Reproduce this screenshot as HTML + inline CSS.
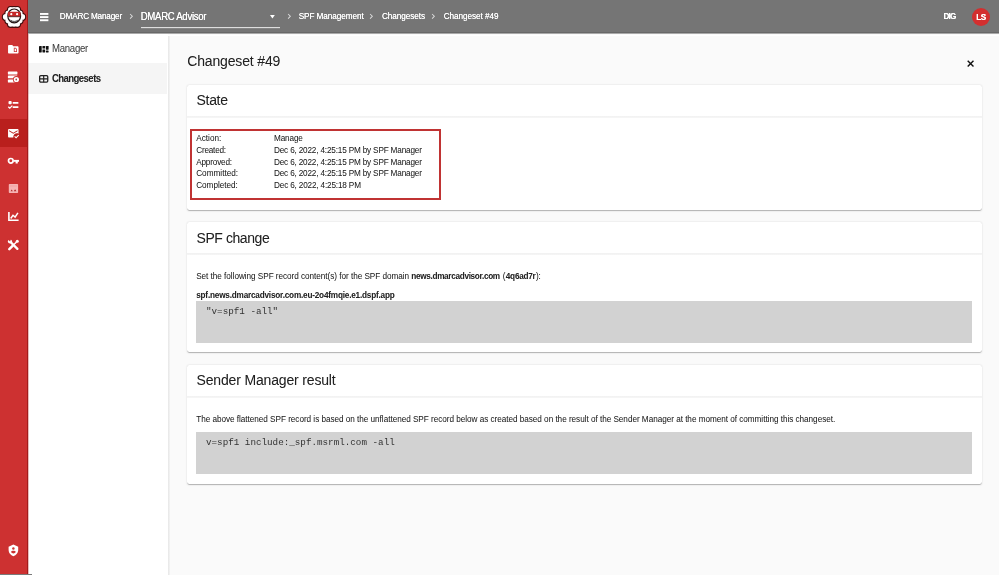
<!DOCTYPE html>
<html><head><meta charset="utf-8">
<style>
*{box-sizing:border-box;margin:0;padding:0}
html,body{width:999px;height:575px;overflow:hidden;background:#fafafa;font-family:"Liberation Sans",sans-serif;color:#212121}
#rail{position:absolute;left:0;top:0;width:28px;height:575px;background:#cd3131;border-right:1px solid #a31b1b}
#re{position:absolute;left:28px;top:34px;width:1px;height:541px;background:rgba(190,70,70,.35)}
#rail .act{position:absolute;left:0;top:119px;width:27px;height:28px;background:#b91f1d}
#rail svg{position:absolute;fill:#fff}
#gs{position:absolute;left:0;top:574px;width:32px;height:1px;background:#7a7a7a}
#hdr{position:absolute;left:28px;top:0;width:971px;height:34px;background:#757575;box-shadow:inset 0 -1px 0 #686868;border-bottom:1px solid #a9a9a9}
#hdr svg{position:absolute;fill:#fff}
#ul{position:absolute;left:140.7px;top:27px;width:139.3px;height:1px;background:#dedede;box-shadow:0 1px 0 rgba(255,255,255,.12)}
#av{position:absolute;left:972px;top:7.7px;width:18.4px;height:18.4px;border-radius:50%;background:#d32f2f}
#nav{position:absolute;left:28px;top:34px;width:140px;height:541px;background:#fff}
#nb{position:absolute;left:168px;top:36px;width:2px;height:539px;background:linear-gradient(90deg,#e6e6e6,#f4f4f4)}
#wl{position:absolute;left:168px;top:35px;width:831px;height:1px;background:#fff}
#nav .sel{position:absolute;left:0;top:29px;width:139px;height:31px;background:#f5f5f5}
.card{position:absolute;left:186.8px;width:795.4px;background:#fff;box-shadow:0 1.2px .6px -.6px rgba(0,0,0,.2),0 .6px .6px 0 rgba(0,0,0,.14),0 .6px 1.8px 0 rgba(0,0,0,.17);border-radius:2.3px}
.card .hr{position:absolute;left:0;right:0;top:31.5px;height:2px;background:linear-gradient(#f1f1f1,#f6f6f6)}
.t{position:absolute;white-space:pre;text-shadow:0 0 .4px rgba(33,33,33,.15)}
.w{text-shadow:0 0 .6px #fff}
.code{position:absolute;left:196px;width:776px;background:#d2d2d2}
#rb{position:absolute;left:189.8px;top:128.7px;width:251.6px;height:71.3px;border:2px solid #c03333}
svg{overflow:visible}
#root{position:absolute;left:0;top:0;width:999px;height:575px;will-change:transform}
</style></head><body>
<div id="root">
<div id="rail"><div class="act"></div>
<!-- logo -->
<svg style="left:0;top:0" width="28" height="34" viewBox="0 0 28 34">
<g fill="#3d0c0c"><circle cx="10.80" cy="9.90" r="3.9"/><circle cx="14.00" cy="9.90" r="3.9"/><circle cx="17.20" cy="9.90" r="3.9"/><circle cx="19.75" cy="13.40" r="3.9"/><circle cx="22.30" cy="16.90" r="3.9"/><circle cx="19.75" cy="20.45" r="3.9"/><circle cx="17.20" cy="24.00" r="3.9"/><circle cx="14.00" cy="24.00" r="3.9"/><circle cx="10.80" cy="24.00" r="3.9"/><circle cx="8.25" cy="20.45" r="3.9"/><circle cx="5.70" cy="16.90" r="3.9"/><circle cx="8.25" cy="13.40" r="3.9"/></g><g fill="#fff"><circle cx="10.80" cy="9.90" r="2.8"/><circle cx="14.00" cy="9.90" r="2.8"/><circle cx="17.20" cy="9.90" r="2.8"/><circle cx="19.75" cy="13.40" r="2.8"/><circle cx="22.30" cy="16.90" r="2.8"/><circle cx="19.75" cy="20.45" r="2.8"/><circle cx="17.20" cy="24.00" r="2.8"/><circle cx="14.00" cy="24.00" r="2.8"/><circle cx="10.80" cy="24.00" r="2.8"/><circle cx="8.25" cy="20.45" r="2.8"/><circle cx="5.70" cy="16.90" r="2.8"/><circle cx="8.25" cy="13.40" r="2.8"/><polygon points="10.8,9.9 17.2,9.9 22.3,16.9 17.2,24.0 10.8,24.0 5.7,16.9"/></g>
<ellipse cx="14.200" cy="15.900" rx="6.400" ry="6.900" fill="#fff" stroke="#241414" stroke-width="1.200"/>
<path d="M8.200 11.700h12c.5 1.600.5 3.300 0 4.900h-12c-.5-1.600-.5-3.300 0-4.900z" fill="#c62828"/>
<path d="M8.200 16.700h12" stroke="#4a1212" stroke-width=".9"/>
<circle cx="11.300" cy="14.200" r="1.100" fill="#fff"/><circle cx="17.100" cy="14.200" r="1.100" fill="#fff"/>
<path d="M10.600 20.200c2.100 1.700 5.100 1.700 7.200 0" fill="none" stroke="#333" stroke-width=".9"/>
</svg>
<!-- domain -->
<svg style="left:6.8px;top:42.5px" width="12.6" height="12.6" viewBox="0 0 24 24"><path d="M15.88 10.5l1.62 1.62v3.38h-3v-5h1.380zM22 8v10c0 1.100-.9 2-2 2H4c-1.100 0-2-.9-2-2l.01-12c0-1.100.89-2 1.990-2h6l2 2h8c1.100 0 2 .9 2 2zm-3 3.500L16.500 9H13v8h6v-5.500z"/></svg>
<!-- dns + badge -->
<svg style="left:0;top:60px" width="28" height="30" viewBox="0 60 28 30"><rect x="7.9" y="71.6" width="9.5" height="2.9" rx=".6"/><rect x="7.9" y="75.5" width="9.5" height="2.8" rx=".6"/><rect x="7.9" y="79.600" width="9.500" height="2.900" rx=".6"/><circle cx="16.400" cy="79.500" r="3.500" fill="#cd3131"/><circle cx="16.400" cy="79.500" r="2.600"/><ellipse cx="16.200" cy="79.500" rx=".7" ry="1.100" fill="#8a2a2a"/></svg>
<!-- checklist -->
<svg style="left:0;top:95px" width="28" height="20" viewBox="0 95 28 20"><rect x="8.500" y="100.900" width="3.200" height="3.400" rx="1"/><rect x="12.700" y="102" width="5.700" height="1.700" rx=".3"/><rect x="12.700" y="106.200" width="5.700" height="1.800" rx=".3"/><path d="M8.300 106.700l1.500 1.500 2.600-2.600" fill="none" stroke="#fff" stroke-width="1.300"/></svg>
<!-- mark_email_read -->
<svg style="left:7.05px;top:126.8px" width="12.6" height="12.6" viewBox="0 0 24 24"><path d="M12 19c0-3.870 3.130-7 7-7 1.080 0 2.090.25 3 .68V6c0-1.100-.9-2-2-2H4c-1.100 0-2 .9-2 2v12c0 1.100.9 2 2 2h8.080c-.05-.33-.08-.66-.08-1zM4 6l8 5 8-5v2l-8 5-8-5V6zm13.340 16l-3.540-3.540 1.410-1.410 2.120 2.120 4.240-4.240L23 16.340 17.340 22z"/></svg>
<!-- vpn_key -->
<svg style="left:0;top:150px" width="28" height="22" viewBox="0 150 28 22"><circle cx="10.800" cy="160.800" r="2.300" fill="none" stroke="#fff" stroke-width="1.700"/><rect x="13.300" y="159.900" width="5.700" height="1.900"/><rect x="15.600" y="160.500" width="2.200" height="3"/></svg>
<!-- image (dim) -->
<svg style="left:0;top:178px" width="28" height="22" viewBox="0 178 28 22"><rect x="8.800" y="184.100" width="9.300" height="8.800" rx=".7" fill="#f6b4b4"/><path d="M10.600 191.200l1.100-1.700 1.100 1.700zM13.800 191.200l1.300-2 1.300 2z" fill="#b02525"/><rect x="9.800" y="185.700" width="7.300" height=".6" fill="#eb9a9a"/></svg>
<!-- chart line with axes -->
<svg style="left:0;top:206px" width="28" height="22" viewBox="0 206 28 22"><path d="M8.100 212h1.600v7.600h8.900v1.400H8.100z"/><path d="M10.700 218.500l2.300-3.200 2.100 1.800 2.800-4.200" fill="none" stroke="#fff" stroke-width="1.500"/></svg>
<!-- tools -->
<svg style="left:0;top:234px" width="28" height="22" viewBox="0 234 28 22"><path d="M10.300 241.800l7.100 7.100" stroke="#fff" stroke-width="2.300" stroke-linecap="round" fill="none"/><circle cx="10" cy="241.500" r="2.100"/><path d="M7.600 239l2.400 2.400 1.200-2.800z" fill="#cd3131"/><path d="M17.300 241.200l-3.600 3.600" stroke="#fff" stroke-width="1.400" fill="none"/><circle cx="17.300" cy="241.300" r="1.500"/><path d="M12.600 245.900l-3.300 3.300" stroke="#fff" stroke-width="2.500" stroke-linecap="round" fill="none"/></svg>
<!-- shield person -->
<svg style="left:7.2px;top:544px" width="12.8" height="12.8" viewBox="0 0 24 24"><path d="M12 1L3 5v6c0 5.550 3.840 10.740 9 12 5.160-1.260 9-6.450 9-12V5l-9-4z"/><circle cx="12" cy="8.600" r="2.300" fill="#cd3131"/><path d="M7.500 15.200c0-1.800 3-2.700 4.500-2.700s4.500.9 4.500 2.700c-1 1.500-2.600 2.500-4.500 2.500s-3.500-1-4.500-2.500z" fill="#cd3131"/></svg>
</div>
<div id="nav"><div class="sel"></div></div>
<div id="hdr">
<svg style="left:11.800px;top:12.600px" width="8.400" height="8.200" viewBox="0 0 8.400 8.200"><rect x="0" y="0" width="8.400" height="1.900"/><rect x="0" y="3.150" width="8.400" height="1.900"/><rect x="0" y="6.300" width="8.400" height="1.900"/></svg>
</div>
<div id="re"></div><div id="nb"></div><div id="wl"></div>
<div id="gs"></div>
<div id="ul"></div>
<div id="av"></div>
<!-- chevrons -->
<svg style="position:absolute;left:125.6px;top:11.4px;fill:#e0e0e0" width="10.500" height="10.500" viewBox="0 0 24 24"><path d="M10 6L8.590 7.410 13.170 12l-4.580 4.590L10 18l6-6z"/></svg>
<svg style="position:absolute;left:283.5px;top:11.4px;fill:#e0e0e0" width="10.500" height="10.500" viewBox="0 0 24 24"><path d="M10 6L8.590 7.410 13.170 12l-4.580 4.590L10 18l6-6z"/></svg>
<svg style="position:absolute;left:366.1px;top:11.4px;fill:#e0e0e0" width="10.500" height="10.500" viewBox="0 0 24 24"><path d="M10 6L8.590 7.410 13.170 12l-4.580 4.590L10 18l6-6z"/></svg>
<svg style="position:absolute;left:428.1px;top:11.4px;fill:#e0e0e0" width="10.500" height="10.500" viewBox="0 0 24 24"><path d="M10 6L8.590 7.410 13.170 12l-4.580 4.590L10 18l6-6z"/></svg>
<!-- dropdown arrow -->
<svg style="position:absolute;left:269.8px;top:14.6px;fill:#fff" width="4.8" height="3.6" viewBox="0 0 10 5" preserveAspectRatio="none"><path d="M0 0l5 5 5-5z"/></svg>
<!-- close -->
<svg style="position:absolute;left:967.1px;top:59.5px" width="7.2" height="7.2" viewBox="0 0 7.2 7.2"><path d="M.7.7l5.800 5.800M6.500.7L.7 6.500" stroke="#111" stroke-width="1.400" fill="none"/></svg>
<!-- nav icons -->
<svg style="position:absolute;left:38.9px;top:45.5px;fill:#111" width="9.600" height="6.500" viewBox="0 0 9.600 6.500"><rect x="0" y="0" width="2.700" height="6.500" rx=".4"/><rect x="3.450" y="0" width="2.700" height="2.600" rx=".4"/><rect x="3.450" y="3.400" width="2.700" height="3.100" rx=".4"/><rect x="6.900" y="0" width="2.700" height="3.700" rx=".4"/><rect x="6.900" y="4.500" width="2.700" height="2" rx=".4"/></svg>
<svg style="position:absolute;left:39px;top:75px" width="9.4" height="7.8" viewBox="0 0 9.4 7.8"><rect x=".65" y=".65" width="8.1" height="6.5" rx="1.1" fill="none" stroke="#222" stroke-width="1.3"/><path d="M.6 3.800h8.200M4.700 .6v6.600" stroke="#222" stroke-width="1.200" fill="none"/></svg>
<!-- cards -->
<div class="card" style="top:84.500px;height:125.200px"><div class="hr"></div></div>
<div class="card" style="top:221.900px;height:130.200px"><div class="hr"></div></div>
<div class="card" style="top:364.500px;height:119px"><div class="hr"></div></div>
<div id="rb"></div>
<div class="code" style="top:301px;height:42px"></div>
<div class="code" style="top:432px;height:42px"></div>

<span class="t w" style="left:59.8px;top:11.84px;font-size:8.2px;line-height:9.84px;color:#fff;letter-spacing:-0.184px;">DMARC Manager</span>
<span class="t w" style="left:140.7px;top:10.91px;font-size:9.6px;line-height:11.52px;color:#fff;transform:scaleY(1.12);transform-origin:0 9.09px;letter-spacing:-0.293px;">DMARC Advisor</span>
<span class="t w" style="left:298.7px;top:11.84px;font-size:8.2px;line-height:9.84px;color:#fff;letter-spacing:-0.069px;">SPF Management</span>
<span class="t w" style="left:382.0px;top:11.84px;font-size:8.2px;line-height:9.84px;color:#fff;letter-spacing:-0.078px;">Changesets</span>
<span class="t w" style="left:443.7px;top:11.84px;font-size:8.2px;line-height:9.84px;color:#fff;letter-spacing:-0.054px;">Changeset #49</span>
<span class="t w" style="left:943.5px;top:12.14px;font-size:8.2px;line-height:9.84px;color:#fff;font-weight:bold;letter-spacing:-0.831px;">DIG</span>
<span class="t w" style="left:976.3px;top:12.84px;font-size:8.2px;line-height:9.84px;color:#fff;font-weight:bold;letter-spacing:-0.569px;">LS</span>
<span class="t" style="left:51.9px;top:42.51px;font-size:9.6px;line-height:11.52px;color:#424242;transform:scaleY(1.1);transform-origin:0 9.09px;letter-spacing:-0.246px;">Manager</span>
<span class="t" style="left:51.9px;top:73.41px;font-size:9.6px;line-height:11.52px;color:#212121;font-weight:bold;transform:scaleY(1.1);transform-origin:0 9.09px;letter-spacing:-0.577px;">Changesets</span>
<span class="t" style="left:187.2px;top:53.25px;font-size:14px;line-height:16.8px;color:#212121;letter-spacing:-0.147px;">Changeset #49</span>
<span class="t" style="left:196.5px;top:91.85px;font-size:14px;line-height:16.8px;color:#212121;letter-spacing:-0.301px;">State</span>
<span class="t" style="left:196.5px;top:229.65px;font-size:14px;line-height:16.8px;color:#212121;letter-spacing:-0.429px;">SPF change</span>
<span class="t" style="left:196.5px;top:372.05px;font-size:14px;line-height:16.8px;color:#212121;letter-spacing:-0.161px;">Sender Manager result</span>
<span class="t" style="left:196.2px;top:134.34px;font-size:8.2px;line-height:9.84px;color:#212121;letter-spacing:0.028px;">Action:</span>
<span class="t" style="left:274.0px;top:134.34px;font-size:8.2px;line-height:9.84px;color:#212121;letter-spacing:-0.139px;">Manage</span>
<span class="t" style="left:196.2px;top:146.04px;font-size:8.2px;line-height:9.84px;color:#212121;letter-spacing:-0.215px;">Created:</span>
<span class="t" style="left:274.0px;top:146.04px;font-size:8.2px;line-height:9.84px;color:#212121;letter-spacing:-0.173px;">Dec 6, 2022, 4:25:15 PM by SPF Manager</span>
<span class="t" style="left:196.2px;top:157.74px;font-size:8.2px;line-height:9.84px;color:#212121;letter-spacing:-0.179px;">Approved:</span>
<span class="t" style="left:274.0px;top:157.74px;font-size:8.2px;line-height:9.84px;color:#212121;letter-spacing:-0.173px;">Dec 6, 2022, 4:25:15 PM by SPF Manager</span>
<span class="t" style="left:196.2px;top:169.44px;font-size:8.2px;line-height:9.84px;color:#212121;letter-spacing:0.005px;">Committed:</span>
<span class="t" style="left:274.0px;top:169.44px;font-size:8.2px;line-height:9.84px;color:#212121;letter-spacing:-0.173px;">Dec 6, 2022, 4:25:15 PM by SPF Manager</span>
<span class="t" style="left:196.2px;top:181.14px;font-size:8.2px;line-height:9.84px;color:#212121;letter-spacing:-0.031px;">Completed:</span>
<span class="t" style="left:274.0px;top:181.14px;font-size:8.2px;line-height:9.84px;color:#212121;letter-spacing:-0.163px;">Dec 6, 2022, 4:25:18 PM</span>
<span class="t" style="left:196.2px;top:272.04px;font-size:8.2px;line-height:9.84px;color:#212121;letter-spacing:-0.041px;">Set the following SPF record content(s) for the SPF domain </span>
<span class="t" style="left:411.3px;top:272.04px;font-size:8.2px;line-height:9.84px;color:#212121;font-weight:bold;letter-spacing:-0.315px;">news.dmarcadvisor.com</span>
<span class="t" style="left:502.8px;top:272.04px;font-size:8.2px;line-height:9.84px;color:#212121;">(</span>
<span class="t" style="left:505.8px;top:272.04px;font-size:8.2px;line-height:9.84px;color:#212121;font-weight:bold;letter-spacing:-0.234px;">4q6ad7r</span>
<span class="t" style="left:535.9px;top:272.04px;font-size:8.2px;line-height:9.84px;color:#212121;letter-spacing:-0.170px;">):</span>
<span class="t" style="left:196.2px;top:290.74px;font-size:8.2px;line-height:9.84px;color:#212121;font-weight:bold;letter-spacing:-0.195px;">spf.news.dmarcadvisor.com.eu-2o4fmqie.e1.dspf.app</span>
<span class="t" style="left:196.2px;top:415.24px;font-size:8.2px;line-height:9.84px;color:#212121;letter-spacing:-0.037px;">The above flattened SPF record is based on the unflattened SPF record below as created based on the result of the Sender Manager at the moment of committing this changeset.</span>
<span class="t" style="left:206.0px;top:306.28px;font-size:9.26px;line-height:11.11px;color:#333;font-family:'Liberation Mono',monospace;text-shadow:none;">"v=spf1 -all"</span>
<span class="t" style="left:206.0px;top:436.88px;font-size:9.26px;line-height:11.11px;color:#333;font-family:'Liberation Mono',monospace;text-shadow:none;">v=spf1 include:_spf.msrml.com -all</span>
</div>
</body></html>
